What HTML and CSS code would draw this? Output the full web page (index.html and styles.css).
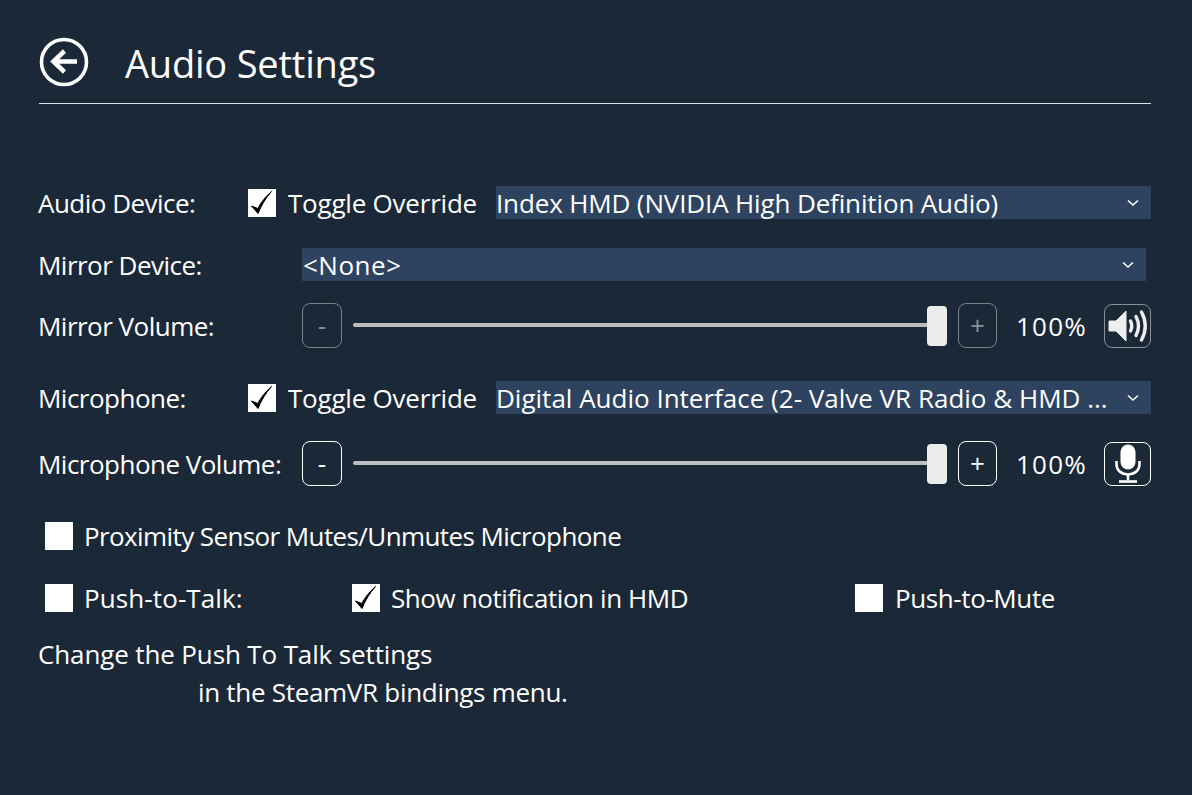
FILE: index.html
```html
<!DOCTYPE html>
<html lang="en">
<head>
<meta charset="utf-8">
<title>Audio Settings</title>
<link rel="stylesheet" href="styles.css">
</head>
<body>
<main class="panel">
  <header class="header">
    <button class="back" aria-label="Back">
      <svg viewBox="0 0 50 50" width="50" height="50"><circle cx="25" cy="25" r="22.5" fill="none" stroke="#fff" stroke-width="3.6"/><path d="M25.5 14 L14.5 24.5 L25.5 35 M15 24.5 H38" fill="none" stroke="#fff" stroke-width="4.6" stroke-linejoin="miter"/></svg>
    </button>
    <h1 class="title">Audio Settings</h1>
  </header>

  <div class="row row-device">
    <span class="label label-device">Audio Device:</span>
    <span class="check checked"><svg viewBox="0 0 28 28"><path d="M3.500 17 L10 24.500 C13 17 17.500 9 23.500 2.500 C17.500 7.500 13 13.500 9.800 19.500 Z" fill="#000" stroke="#000" stroke-width="1"/></svg></span>
    <span class="check-text toggle-text">Toggle Override</span>
    <div class="select select-device"><span class="select-text">Index HMD (NVIDIA High Definition Audio)</span><svg class="chev" viewBox="0 0 12 8"><path d="M1 1.500 L6 6 L11 1.500" fill="none" stroke="#fff" stroke-width="1.600"/></svg></div>
  </div>

  <div class="row row-mirror">
    <span class="label label-wide">Mirror Device:</span>
    <div class="select select-mirror"><span class="select-text select-none">&lt;None&gt;</span><svg class="chev" viewBox="0 0 12 8"><path d="M1 1.500 L6 6 L11 1.500" fill="none" stroke="#fff" stroke-width="1.600"/></svg></div>
  </div>

  <div class="row row-volume row-mirrorvol dim">
    <span class="label label-wide">Mirror Volume:</span>
    <button class="step">-</button>
    <div class="slider"><div class="track"></div><div class="thumb"></div></div>
    <button class="step plus">+</button>
    <span class="percent">100%</span>
    <button class="icon-btn" aria-label="Mute mirror">
      <svg viewBox="0 0 46 44" width="46" height="44"><path d="M4 17 H11 L21 7 V37 L11 27 H4 Z" fill="#eee" stroke="#eee" stroke-width="1" stroke-linejoin="round"/><g fill="none" stroke="#eee" stroke-linecap="round"><path d="M25.500 17 Q28 22 25.500 27" stroke-width="3.400"/><path d="M31 12.500 Q36 22 31 31.500" stroke-width="3.400"/><path d="M36.500 8 Q44 22 36.500 36" stroke-width="3.400"/></g></svg>
    </button>
  </div>

  <div class="row row-mic">
    <span class="label label-device">Microphone:</span>
    <span class="check checked"><svg viewBox="0 0 28 28"><path d="M3.500 17 L10 24.500 C13 17 17.500 9 23.500 2.500 C17.500 7.500 13 13.500 9.800 19.500 Z" fill="#000" stroke="#000" stroke-width="1"/></svg></span>
    <span class="check-text toggle-text">Toggle Override</span>
    <div class="select select-device"><span class="select-text select-long">Digital Audio Interface (2- Valve VR Radio &amp; HMD ...</span><svg class="chev" viewBox="0 0 12 8"><path d="M1 1.500 L6 6 L11 1.500" fill="none" stroke="#fff" stroke-width="1.600"/></svg></div>
  </div>

  <div class="row row-volume row-micvol">
    <span class="label label-wide">Microphone Volume:</span>
    <button class="step">-</button>
    <div class="slider"><div class="track"></div><div class="thumb"></div></div>
    <button class="step plus">+</button>
    <span class="percent">100%</span>
    <button class="icon-btn" aria-label="Mute microphone">
      <svg viewBox="0 0 46 44" width="46" height="44"><rect x="15.500" y="2.500" width="15" height="25" rx="7.500" fill="#fff"/><path d="M11.500 19 V22 C11.500 36 34.500 36 34.500 22 V19" fill="none" stroke="#fff" stroke-width="2.600"/><path d="M23 32 V38" stroke="#fff" stroke-width="2.600"/><path d="M14 39.500 H32" stroke="#fff" stroke-width="2.600"/></svg>
    </button>
  </div>

  <div class="row row-prox">
    <span class="check"></span>
    <span class="check-text prox-text">Proximity Sensor Mutes/Unmutes Microphone</span>
  </div>

  <div class="row row-ptt">
    <span class="check"></span>
    <span class="check-text ptt-text">Push-to-Talk:</span>
    <span class="check checked"><svg viewBox="0 0 28 28"><path d="M3.500 17 L10 24.500 C13 17 17.500 9 23.500 2.500 C17.500 7.500 13 13.500 9.800 19.500 Z" fill="#000" stroke="#000" stroke-width="1"/></svg></span>
    <span class="check-text notif-text">Show notification in HMD</span>
    <span class="check"></span>
    <span class="check-text mute-text">Push-to-Mute</span>
  </div>

  <p class="note"><span class="note-first">Change the Push To Talk settings</span><br><span class="note-indent">in the SteamVR bindings menu.</span></p>
</main>
</body>
</html>
```
FILE: styles.css
```css
* { box-sizing: border-box; }
html, body { margin: 0; padding: 0; height: 100%; }
body {
  background: #1b2838;
  color: #fff;
  font-family: "Open Sans", "Noto Sans", sans-serif;
  font-size: 26px;
  letter-spacing: -0.4px;
  overflow: hidden;
}
.panel { width: 1192px; height: 795px; padding: 0 41px 0 39px; display: flex; flex-direction: column; }
.header { height: 104px; border-bottom: 1px solid #dfe2e5; display: flex; align-items: center; padding-top: 21px; flex: none; }
.back { width: 50px; height: 50px; padding: 0; background: none; border: 0; display: block; }
.back svg { display: block; }
.title { font-size: 38px; font-weight: 400; margin: 2px 0 0 36px; letter-spacing: -0.2px; line-height: 1; }
.row { display: flex; align-items: center; flex: none; }
.row-device { height: 33px; margin-top: 82px; }
.row-mirror { height: 33px; margin-top: 29px; }
.row-mirrorvol { height: 45px; margin-top: 22px; }
.row-mic { height: 33px; margin-top: 33px; }
.row-micvol { height: 45px; margin-top: 27px; }
.row-prox { height: 28px; margin-top: 36px; padding-left: 6px; }
.row-ptt { height: 28px; margin-top: 34px; padding-left: 6px; }
.label { flex: none; white-space: nowrap; letter-spacing: -0.52px; text-indent: -1px; }
.label-device { width: 209px; }
.label-wide { width: 263px; }
.check { width: 28px; height: 28px; background: #fff; flex: none; display: block; }
.check svg { display: block; width: 28px; height: 28px; }
.check-text { margin-left: 12px; white-space: nowrap; flex: none; }
.toggle-text { letter-spacing: -0.22px; }
.prox-text { margin-left: 11px; letter-spacing: -0.6px; }
.ptt-text { margin-left: 11px; width: 268px; letter-spacing: 0.1px; }
.notif-text { width: 464px; margin-left: 11px; letter-spacing: -0.42px; }
.mute-text { letter-spacing: -0.4px; }
.select { height: 33px; background: #2d435f; display: flex; align-items: center; justify-content: space-between; padding: 0 12px 0 0; flex: none; letter-spacing: -0.14px; }
.select-device { width: 655px; margin-left: auto; }
.select-mirror { width: 844px; padding-left: 1px; }
.select-text { white-space: nowrap; }
.select-long { letter-spacing: 0; }
.select-none { letter-spacing: 0.5px; }
.chev { width: 12px; height: 8px; flex: none; }
.step { width: 40px; height: 45px; border: 1.500px solid #fff; border-radius: 8px; background: none; color: #fff; font: inherit; font-size: 26px; padding: 0 0 2px; flex: none; }
.plus { width: 39px; }
.slider { width: 594px; margin: 0 11px; height: 40px; display: flex; align-items: center; position: relative; flex: none; }
.track { width: 100%; height: 4px; margin-top: -1px; background: #bdbdbd; border-radius: 2px; }
.thumb { position: absolute; right: 0; top: 0; width: 20px; height: 40px; background: #ebebeb; border-radius: 4px; }
.percent { width: 107px; padding-left: 19px; flex: none; white-space: nowrap; letter-spacing: 1.2px; }
.icon-btn { width: 47px; height: 44px; border: 1.500px solid #fff; border-radius: 8px; background: none; padding: 0; flex: none; display: flex; align-items: center; justify-content: center; }
.icon-btn svg { display: block; flex: none; }
.dim .step { border-color: #7d8186; color: #8b8e92; }
.dim .icon-btn { border-color: #8b8e92; }
.note { margin: 23px 0 0; line-height: 38px; text-indent: -1px; }
.note-first { letter-spacing: -0.13px; }
.note-indent { margin-left: 159px; letter-spacing: -0.3px; }
```
